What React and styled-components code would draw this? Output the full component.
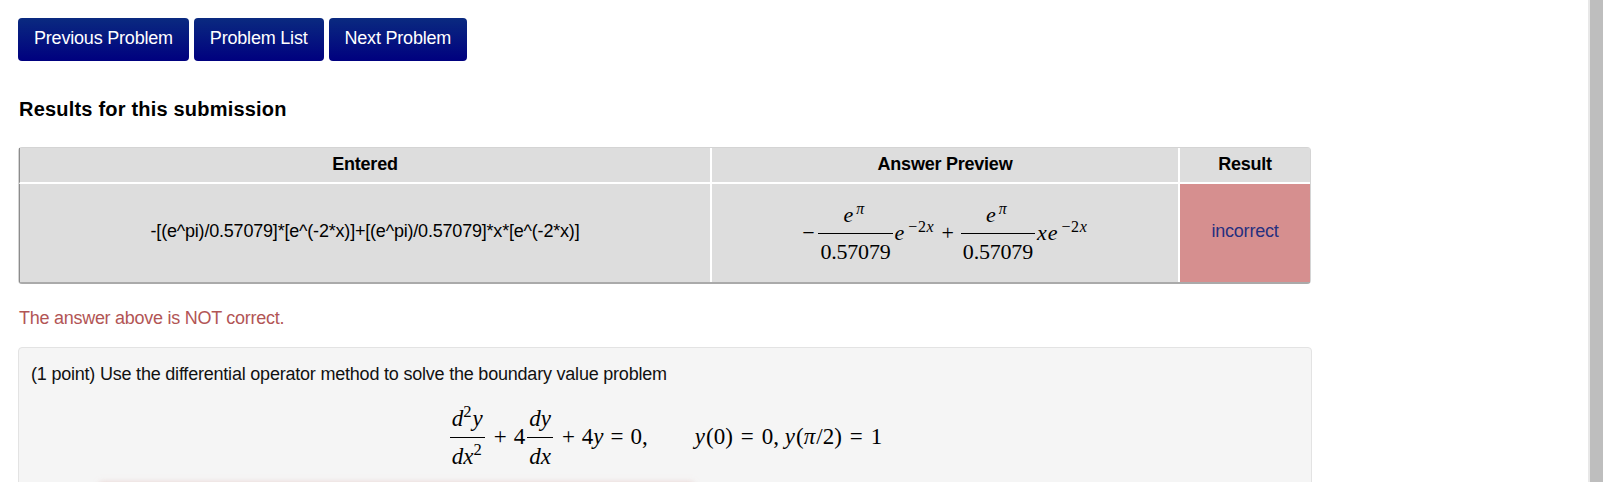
import React from "react";
import styled, { createGlobalStyle } from "styled-components";

const GlobalStyle = createGlobalStyle`
  html, body {
    margin: 0;
    height: 482px;
    overflow: hidden;
    background: #fff;
    font-family: "Liberation Sans", Arial, sans-serif;
  }
`;

const Shell = styled.div`
  display: flex;
  width: 1603px;
  height: 482px;
  overflow: hidden;
`;
const Page = styled.main`
  width: 1294px;
  margin-left: 18px;
  padding-top: 18px;
`;
const Scrollbar = styled.div`
  width: 13px;
  margin-left: auto;
  background: #bebebe;
  border-left: 2px solid #e8e8e8;
`;

const Nav = styled.nav`
  display: flex;
  gap: 5px;
`;
const NavButton = styled.a`
  display: block;
  height: 43px;
  padding: 0 16px;
  box-sizing: border-box;
  border-radius: 4px;
  background: linear-gradient(#0a2a80, #00007f);
  color: #fff;
  font-size: 18px;
  line-height: 41px;
  letter-spacing: -0.2px;
`;

const Heading = styled.h2`
  margin: 36px 0 0 1px;
  font-size: 20px;
  line-height: 24px;
  font-weight: 700;
  letter-spacing: 0.2px;
  color: #000;
`;

const Results = styled.table`
  width: 1293px;
  height: 137px;
  margin-top: 26px;
  border-collapse: separate;
  border-spacing: 0;
  border: 1px solid #d4d4d4;
  border-bottom: 2px solid #aaa;
  border-radius: 4px;
  table-layout: fixed;
  color: #000;
`;
const Column = styled.col`
  width: ${(p) => (p.$width ? `${p.$width}px` : "auto")};
`;
const HeadCell = styled.th`
  height: 32px;
  padding: 0 0 2px;
  background: #ddd;
  border-left: ${(p) => (p.$first ? "1px solid #8c8c8c" : "2px solid #fff")};
  border-bottom: 2px solid #fff;
  font-size: 18px;
  font-weight: 700;
  letter-spacing: -0.23px;
`;
const Cell = styled.td`
  padding: 0 0 ${(p) => (p.$math ? 0 : 3)}px;
  text-align: center;
  background: ${(p) => (p.$bad ? "#d68f8f" : "#ddd")};
  color: ${(p) => (p.$bad ? "#27307f" : "#000")};
  border-left: ${(p) => (p.$first ? "1px solid #8c8c8c" : "2px solid #fff")};
  font-size: 18px;
  letter-spacing: -0.2px;
`;

const Message = styled.p`
  margin: 22px 0 0 1px;
  color: #b25555;
  font-size: 18px;
  line-height: 24px;
  letter-spacing: -0.27px;
`;

const ProblemBox = styled.section`
  height: 200px;
  margin-top: 17px;
  padding: 14px 12px;
  box-sizing: border-box;
  background: #f5f5f5;
  border: 1px solid #e3e3e3;
  border-radius: 4px;
`;
const ProblemText = styled.p`
  margin: 0;
  font-size: 18px;
  line-height: 24px;
  letter-spacing: -0.21px;
  color: #111;
`;

const Equation = styled.div`
  display: flex;
  justify-content: center;
  align-items: center;
  height: 72px;
  margin-top: 15px;
`;
const MathLine = styled.span`
  display: inline-flex;
  align-items: center;
  justify-content: center;
  font-family: "Liberation Serif", serif;
  font-size: ${(p) => p.$size || 23}px;
  color: #000;
  white-space: nowrap;
`;
const Fraction = styled.span`
  display: inline-flex;
  flex-direction: column;
  align-items: center;
  line-height: 27px;
  margin: 0 2px;
`;
const Numerator = styled.span`
  align-self: stretch;
  padding: 0 2px 5px;
  border-bottom: 1px solid #000;
  text-align: center;
`;
const Denominator = styled.span`
  padding: ${(p) => (p.$low ? 5 : 4)}px 2px 0;
`;
const Var = styled.i`
  letter-spacing: 1px;
`;
const TightVar = styled.i`
  letter-spacing: 0;
`;
const Sup = styled.sup`
  margin: 0 2px;
  font-size: 0.72em;
  line-height: 0;
  vertical-align: 0.5em;
  letter-spacing: 0.5px;
`;
const TightSup = styled(Sup)`
  margin: 0 1px 0 0;
  letter-spacing: 0;
`;
const Lifted = styled.span`
  position: relative;
  top: -6px;
  margin: 0 2px 0 3px;
  font-size: 16px;
  letter-spacing: 0.6px;
`;
const Op = styled.span`
  margin: 0 ${(p) => p.$gap ?? 8}px;
`;
const Spacer = styled.span`
  width: 47px;
`;
const Pink = styled.div`
  width: 593px;
  height: 30px;
  margin: 10px 0 0 69px;
  background: #f3dfdc;
  box-shadow: 0 0 6px rgba(220, 170, 165, 0.6);
`;

const preview = (
  <MathLine $size={22}>
    <Op $gap={2}>−</Op>
    <Fraction>
      <Numerator><Var>e</Var><Sup><Var>π</Var></Sup></Numerator>
      <Denominator>0.57079</Denominator>
    </Fraction>
    <Var>e</Var><Lifted>−2<Var>x</Var></Lifted>
    <Op $gap={5}>+</Op>
    <Fraction>
      <Numerator><Var>e</Var><Sup><Var>π</Var></Sup></Numerator>
      <Denominator>0.57079</Denominator>
    </Fraction>
    <Var>xe</Var><Lifted>−2<Var>x</Var></Lifted>
  </MathLine>
);

export default function App() {
  return (
    <Shell>
      <GlobalStyle />
      <Page>
        <Nav>
          <NavButton>Previous Problem</NavButton>
          <NavButton>Problem List</NavButton>
          <NavButton>Next Problem</NavButton>
        </Nav>
        <Heading>Results for this submission</Heading>
        <Results>
          <colgroup>
            <Column $width={691} />
            <Column $width={468} />
            <Column />
          </colgroup>
          <thead>
            <tr>
              <HeadCell $first>Entered</HeadCell>
              <HeadCell>Answer Preview</HeadCell>
              <HeadCell>Result</HeadCell>
            </tr>
          </thead>
          <tbody>
            <tr>
              <Cell $first>-[(e^pi)/0.57079]*[e^(-2*x)]+[(e^pi)/0.57079]*x*[e^(-2*x)]</Cell>
              <Cell $math>{preview}</Cell>
              <Cell $bad>incorrect</Cell>
            </tr>
          </tbody>
        </Results>
        <Message>The answer above is NOT correct.</Message>
        <ProblemBox>
          <ProblemText>(1 point) Use the differential operator method to solve the boundary value problem</ProblemText>
          <Equation>
            <MathLine>
              <Fraction>
                <Numerator><TightVar>d</TightVar><TightSup>2</TightSup><TightVar>y</TightVar></Numerator>
                <Denominator $low><TightVar>dx</TightVar><TightSup>2</TightSup></Denominator>
              </Fraction>
              <Op $gap={7}>+</Op>4
              <Fraction>
                <Numerator><TightVar>dy</TightVar></Numerator>
                <Denominator $low><TightVar>dx</TightVar></Denominator>
              </Fraction>
              <Op $gap={7}>+</Op>4<TightVar>y</TightVar><Op $gap={7}>=</Op>0,
              <Spacer />
              <Var>y</Var>(0)<Op>=</Op>0,&nbsp;<Var>y</Var>(<Var>π</Var>/2)<Op>=</Op>1
            </MathLine>
          </Equation>
          <Pink />
        </ProblemBox>
      </Page>
      <Scrollbar />
    </Shell>
  );
}
